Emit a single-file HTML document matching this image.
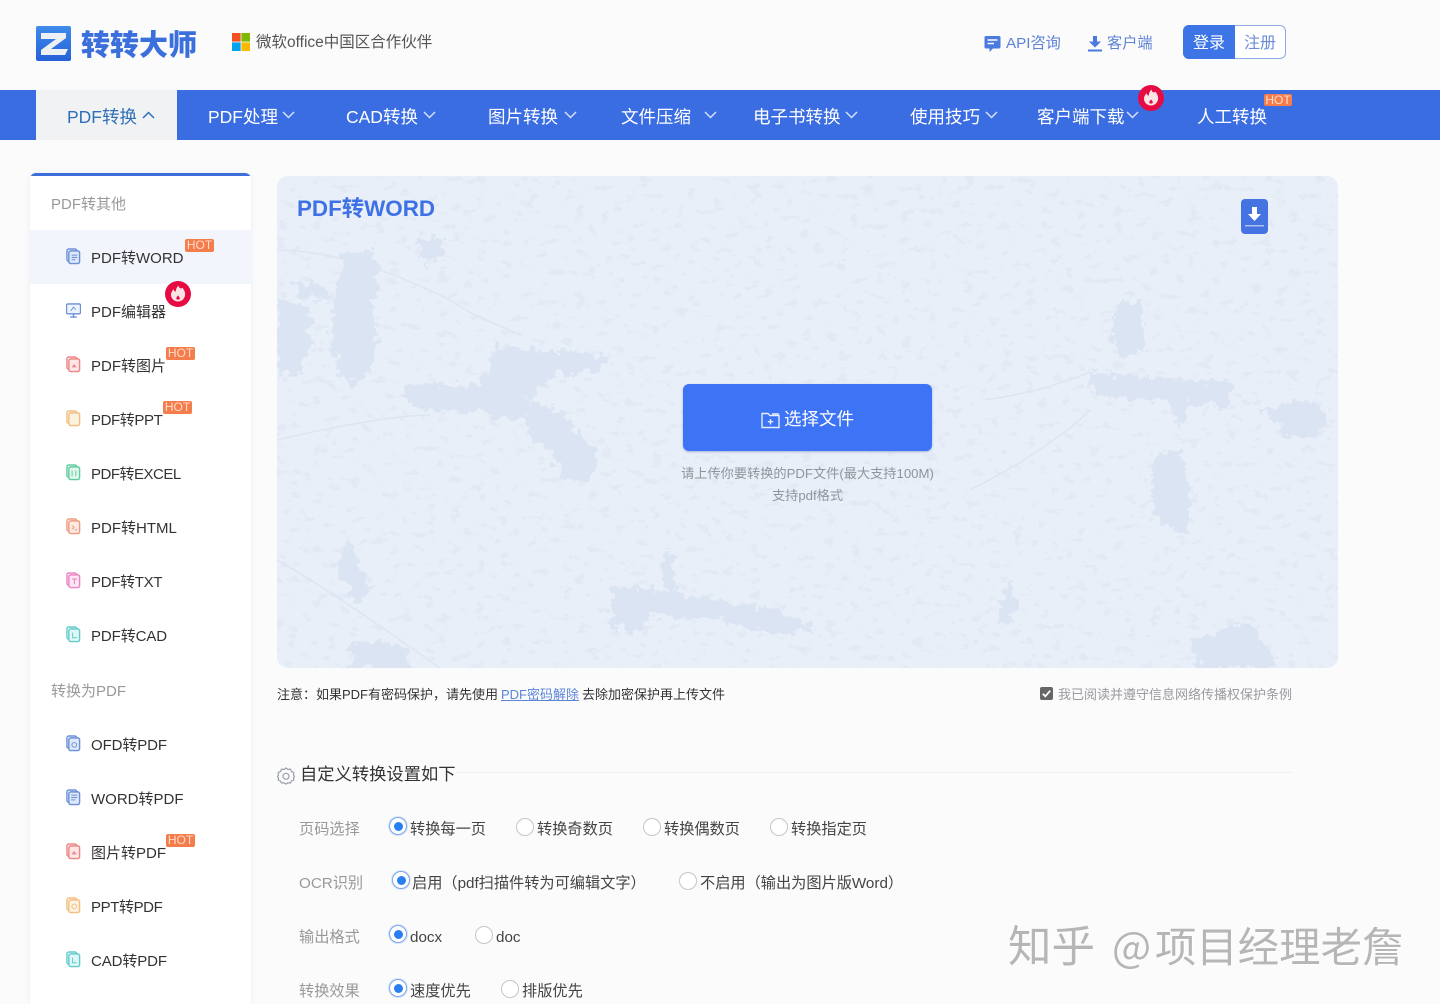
<!DOCTYPE html>
<html lang="zh">
<head>
<meta charset="utf-8">
<title>PDF转WORD</title>
<style>
html,body{margin:0;padding:0;background:#fbfbfc;width:1440px;height:1004px;overflow:hidden;}
body{position:relative;font-family:"Liberation Sans","Noto Sans CJK SC",sans-serif;color:#333;}
#w{position:absolute;left:0;top:0;width:1440px;height:1004px;overflow:hidden;}
.t{position:absolute;white-space:nowrap;line-height:24px;height:24px;}
.a{position:absolute;}
.nav{font-size:17.500px;color:#fff;top:105px;}
.chev{position:absolute;top:111px;width:13px;height:8px;}
.side{font-size:15px;color:#333;left:91px;}
.ghead{font-size:15px;color:#999;left:51px;}
.hot{position:absolute;width:29px;height:13px;background:#f57c4b;border-radius:2px;color:#ffdccd;font:12px/13px "Liberation Sans",sans-serif;text-align:center;}
.flame{position:absolute;width:26px;height:26px;}
.ic{position:absolute;left:66px;width:15px;height:17px;}
.lab{font-size:15.200px;color:#999;left:299px;}
.opt{font-size:15.200px;color:#444;}
.r{position:absolute;width:16px;height:16px;border:1px solid #c6c6c6;border-radius:50%;background:#fff;}
.r.on{border:1px solid #7fa8ea;box-shadow:0 0 0 1px #d6e4f8;}
.r.on:after{content:"";position:absolute;left:3.500px;top:3.500px;width:9px;height:9px;border-radius:50%;background:#2a7ff0;}
</style>
</head>
<body>
<div id="w">

<!-- header -->
<svg class="a" style="left:36px;top:26px" width="35" height="35" viewBox="0 0 35 35">
<defs><linearGradient id="lg" x1="0" y1="0" x2="0" y2="1"><stop offset="0" stop-color="#3f8bea"/><stop offset="1" stop-color="#2561d8"/></linearGradient></defs>
<rect width="35" height="35" rx="2" fill="url(#lg)"/>
<path d="M5 7H30V12L15 23H32L29 29H5V24L20 13H5Z" fill="#eef1f4"/>
</svg>
<div class="t" style="left:81px;top:28px;height:30px;line-height:30px;font-size:29px;font-weight:900;color:#3b70dc;font-family:'Noto Sans CJK SC',sans-serif;">转转大师</div>
<svg class="a" style="left:232px;top:33px" width="18" height="18" viewBox="0 0 18 18">
<rect width="8.600" height="8.600" fill="#f25022"/><rect x="9.400" width="8.600" height="8.600" fill="#7fba00"/><rect y="9.400" width="8.600" height="8.600" fill="#00a4ef"/><rect x="9.400" y="9.400" width="8.600" height="8.600" fill="#ffb900"/>
</svg>
<div class="t" style="left:256px;top:31px;font-size:15.500px;color:#555;">微软office中国区合作伙伴</div>

<svg class="a" style="left:984px;top:35px" width="17" height="18" viewBox="0 0 17 18">
<path d="M2 1H15A1.500 1.500 0 0 1 16.500 2.500V12A1.500 1.500 0 0 1 15 13.500H9L5.500 17V13.500H2A1.500 1.500 0 0 1 .5 12V2.500A1.500 1.500 0 0 1 2 1Z" fill="#4a7ae0"/>
<path d="M3.500 5H13.500M3.500 8.500H10" stroke="#fff" stroke-width="1.400"/>
</svg>
<div class="t" style="left:1006px;top:32px;font-size:15.200px;color:#5f83d4;">API咨询</div>
<svg class="a" style="left:1087px;top:35px" width="16" height="17" viewBox="0 0 16 17">
<path d="M6 1H10V6.500H14L8 12.500L2 6.500H6Z" fill="#4a7ae0"/><rect x="1" y="14.500" width="14" height="2" fill="#4a7ae0"/>
</svg>
<div class="t" style="left:1107px;top:32px;font-size:15.200px;color:#5f83d4;">客户端</div>
<div class="a" style="left:1183px;top:25px;width:101px;height:32px;border:1px solid #8fa9e3;border-radius:6px;background:#fff;"></div>
<div class="a" style="left:1183px;top:25px;width:52px;height:34px;background:#3d74e6;border-radius:6px 0 0 6px;"></div>
<div class="t" style="left:1193px;top:32px;font-size:16px;color:#fff;">登录</div>
<div class="t" style="left:1244px;top:32px;font-size:16px;color:#6d8cd6;">注册</div>

<!-- nav -->
<div class="a" style="left:0;top:90px;width:1440px;height:50px;background:#3a6ce2;"></div>
<div class="a" style="left:36px;top:90px;width:141px;height:50px;background:#f1f2f4;"></div>
<div class="t nav" style="left:67px;color:#2e6fb8;">PDF转换</div>
<svg class="chev" style="left:142px" viewBox="0 0 13 8"><path d="M1 7L6.500 1.500L12 7" fill="none" stroke="#2e6fb8" stroke-width="1.500"/></svg>
<div class="t nav" style="left:208px;">PDF处理</div>
<svg class="chev" style="left:282px" viewBox="0 0 13 8"><path d="M1 1L6.500 6.500L12 1" fill="none" stroke="#d5e1f8" stroke-width="1.500"/></svg>
<div class="t nav" style="left:346px;">CAD转换</div>
<svg class="chev" style="left:423px" viewBox="0 0 13 8"><path d="M1 1L6.500 6.500L12 1" fill="none" stroke="#d5e1f8" stroke-width="1.500"/></svg>
<div class="t nav" style="left:488px;">图片转换</div>
<svg class="chev" style="left:564px" viewBox="0 0 13 8"><path d="M1 1L6.500 6.500L12 1" fill="none" stroke="#d5e1f8" stroke-width="1.500"/></svg>
<div class="t nav" style="left:621px;">文件压缩</div>
<svg class="chev" style="left:704px" viewBox="0 0 13 8"><path d="M1 1L6.500 6.500L12 1" fill="none" stroke="#d5e1f8" stroke-width="1.500"/></svg>
<div class="t nav" style="left:753px;">电子书转换</div>
<svg class="chev" style="left:845px" viewBox="0 0 13 8"><path d="M1 1L6.500 6.500L12 1" fill="none" stroke="#d5e1f8" stroke-width="1.500"/></svg>
<div class="t nav" style="left:910px;">使用技巧</div>
<svg class="chev" style="left:985px" viewBox="0 0 13 8"><path d="M1 1L6.500 6.500L12 1" fill="none" stroke="#d5e1f8" stroke-width="1.500"/></svg>
<div class="t nav" style="left:1037px;">客户端下载</div>
<svg class="chev" style="left:1126px" viewBox="0 0 13 8"><path d="M1 1L6.500 6.500L12 1" fill="none" stroke="#d5e1f8" stroke-width="1.500"/></svg>
<div class="t nav" style="left:1197px;">人工转换</div>
<svg class="flame" style="left:1138px;top:85px" viewBox="0 0 26 26"><circle cx="13" cy="13" r="13" fill="#e60b42"/><path d="M13.500 4.500C14 7.500 16 8 17.500 6.800C19.800 10 20.500 12 20 14.500C19.500 18 16.500 20.500 13 20.500C9.500 20.500 6.500 18 6 14.500C5.700 12 7 10 8.500 8.200C9 10 10 10.500 10.800 10.500C10.800 8 12 6 13.500 4.500Z" fill="#fbe3e6"/><path d="M13 14.500C14.300 15.800 15 16.800 14.700 18C14.200 18.800 11.800 18.800 11.300 18C11 16.800 12 15.800 13 14.500Z" fill="#e60b42"/></svg>
<div class="hot" style="left:1264px;top:94px;width:28px;height:12px;line-height:12px;">HOT</div>

<!-- sidebar -->
<div class="a" style="left:30px;top:173px;width:221px;height:831px;background:#fff;border-radius:6px 6px 0 0;box-shadow:0 0 5px rgba(120,130,150,.13);overflow:hidden;">
  <div style="height:3px;background:#3d6fdc;"></div>
  <div class="a" style="left:0;top:57px;width:221px;height:54px;background:#f2f5fb;"></div>
</div>

<div class="t ghead" style="top:193px;">PDF转其他</div>
<div class="t side" style="top:247px;">PDF转WORD</div>
<div class="t side" style="top:301px;">PDF编辑器</div>
<div class="t side" style="top:355px;">PDF转图片</div>
<div class="t side" style="top:409px;letter-spacing:-.4px;">PDF转PPT</div>
<div class="t side" style="top:463px;letter-spacing:-.5px;">PDF转EXCEL</div>
<div class="t side" style="top:517px;">PDF转HTML</div>
<div class="t side" style="top:571px;letter-spacing:-.3px;">PDF转TXT</div>
<div class="t side" style="top:625px;letter-spacing:-.1px;">PDF转CAD</div>
<div class="t ghead" style="top:680px;">转换为PDF</div>
<div class="t side" style="top:734px;letter-spacing:-.1px;">OFD转PDF</div>
<div class="t side" style="top:788px;">WORD转PDF</div>
<div class="t side" style="top:842px;">图片转PDF</div>
<div class="t side" style="top:896px;letter-spacing:-.4px;">PPT转PDF</div>
<div class="t side" style="top:950px;letter-spacing:-.1px;">CAD转PDF</div>

<div class="hot" style="left:185px;top:239px;">HOT</div>
<div class="hot" style="left:166px;top:347px;">HOT</div>
<div class="hot" style="left:163px;top:401px;">HOT</div>
<div class="hot" style="left:166px;top:834px;">HOT</div>
<svg class="flame" style="left:165px;top:281px" viewBox="0 0 26 26"><circle cx="13" cy="13" r="13" fill="#e60b42"/><path d="M13.500 4.500C14 7.500 16 8 17.500 6.800C19.800 10 20.500 12 20 14.500C19.500 18 16.500 20.500 13 20.500C9.500 20.500 6.500 18 6 14.500C5.700 12 7 10 8.500 8.200C9 10 10 10.500 10.800 10.500C10.800 8 12 6 13.500 4.500Z" fill="#fbe3e6"/><path d="M13 14.500C14.300 15.800 15 16.800 14.700 18C14.200 18.800 11.800 18.800 11.300 18C11 16.800 12 15.800 13 14.500Z" fill="#e60b42"/></svg>

<svg class="ic" style="top:248px" viewBox="0 0 16 18"><rect x="1" y="1" width="10.500" height="13" rx="2" fill="#fff" stroke="#6a90d8" stroke-width="1.500"/><rect x="3" y="3" width="11.500" height="13.500" rx="2" fill="#dfe8f9" stroke="#6a90d8" stroke-width="1.500"/><path d="M6 7.500H12M6 10H12M6 12.500H10" stroke="#6a90d8" stroke-width="1.100"/></svg>
<svg class="ic" style="top:302px" viewBox="0 0 16 18"><rect x="0.500" y="2" width="15" height="10.500" rx="1.500" fill="#eef3fc" stroke="#6a90d8" stroke-width="1.500"/><path d="M8 12.500V15.500M4.500 16H11.500" stroke="#6a90d8" stroke-width="1.500"/><path d="M5 9.500L8 5.500L10.500 8" fill="none" stroke="#6a90d8" stroke-width="1"/></svg>
<svg class="ic" style="top:356px" viewBox="0 0 16 18"><rect x="1" y="1" width="10.500" height="13" rx="2" fill="#fff" stroke="#ee8585" stroke-width="1.500"/><rect x="3" y="3" width="11.500" height="13.500" rx="2" fill="#fce6e6" stroke="#ee8585" stroke-width="1.500"/><path d="M6 12L8.500 8.500L11.500 12Z" fill="#ee8585"/></svg>
<svg class="ic" style="top:410px" viewBox="0 0 16 18"><rect x="1" y="1" width="10.500" height="13" rx="2" fill="#fff" stroke="#f3be7f" stroke-width="1.500"/><rect x="3" y="3" width="11.500" height="13.500" rx="2" fill="#fdf1e0" stroke="#f3be7f" stroke-width="1.500"/></svg>
<svg class="ic" style="top:464px" viewBox="0 0 16 18"><rect x="1" y="1" width="10.500" height="13" rx="2" fill="#fff" stroke="#62cb9e" stroke-width="1.500"/><rect x="3" y="3" width="11.500" height="13.500" rx="2" fill="#e2f8ee" stroke="#62cb9e" stroke-width="1.500"/><path d="M6.500 7V13M10.500 7V13" stroke="#62cb9e" stroke-width="1.100"/></svg>
<svg class="ic" style="top:518px" viewBox="0 0 16 18"><rect x="1" y="1" width="10.500" height="13" rx="2" fill="#fff" stroke="#ef9b7e" stroke-width="1.500"/><rect x="3" y="3" width="11.500" height="13.500" rx="2" fill="#fdeae3" stroke="#ef9b7e" stroke-width="1.500"/><path d="M6.500 8L8.500 10L6.500 12M9 12.500H12" fill="none" stroke="#ef9b7e" stroke-width="1.100"/></svg>
<svg class="ic" style="top:572px" viewBox="0 0 16 18"><rect x="1" y="1" width="10.500" height="13" rx="2" fill="#fff" stroke="#e985c2" stroke-width="1.500"/><rect x="3" y="3" width="11.500" height="13.500" rx="2" fill="#fce6f3" stroke="#e985c2" stroke-width="1.500"/><path d="M6.500 7.500H11.500M9 7.500V13" stroke="#e985c2" stroke-width="1.200"/></svg>
<svg class="ic" style="top:626px" viewBox="0 0 16 18"><rect x="1" y="1" width="10.500" height="13" rx="2" fill="#fff" stroke="#62cccc" stroke-width="1.500"/><rect x="3" y="3" width="11.500" height="13.500" rx="2" fill="#e1f7f7" stroke="#62cccc" stroke-width="1.500"/><path d="M7 7V12.500H11.500" fill="none" stroke="#62cccc" stroke-width="1.100"/></svg>
<svg class="ic" style="top:735px" viewBox="0 0 16 18"><rect x="1" y="1" width="10.500" height="13" rx="2" fill="#fff" stroke="#6a90d8" stroke-width="1.500"/><rect x="3" y="3" width="11.500" height="13.500" rx="2" fill="#dfe8f9" stroke="#6a90d8" stroke-width="1.500"/><circle cx="8.800" cy="10.500" r="2.500" fill="none" stroke="#6a90d8"/></svg>
<svg class="ic" style="top:789px" viewBox="0 0 16 18"><rect x="1" y="1" width="10.500" height="13" rx="2" fill="#fff" stroke="#6a90d8" stroke-width="1.500"/><rect x="3" y="3" width="11.500" height="13.500" rx="2" fill="#dfe8f9" stroke="#6a90d8" stroke-width="1.500"/><path d="M5.500 6.500H12M5.500 9H12M5.500 11.500H10" stroke="#6a90d8" stroke-width="1.100"/></svg>
<svg class="ic" style="top:843px" viewBox="0 0 16 18"><rect x="1" y="1" width="10.500" height="13" rx="2" fill="#fff" stroke="#ee8585" stroke-width="1.500"/><rect x="3" y="3" width="11.500" height="13.500" rx="2" fill="#fce6e6" stroke="#ee8585" stroke-width="1.500"/><path d="M6 12L8.500 8.500L11.500 12Z" fill="#ee8585"/></svg>
<svg class="ic" style="top:897px" viewBox="0 0 16 18"><rect x="1" y="1" width="10.500" height="13" rx="2" fill="#fff" stroke="#f3be7f" stroke-width="1.500"/><rect x="3" y="3" width="11.500" height="13.500" rx="2" fill="#fdf1e0" stroke="#f3be7f" stroke-width="1.500"/><circle cx="8.800" cy="10" r="2.500" fill="none" stroke="#f3be7f"/></svg>
<svg class="ic" style="top:951px" viewBox="0 0 16 18"><rect x="1" y="1" width="10.500" height="13" rx="2" fill="#fff" stroke="#62cccc" stroke-width="1.500"/><rect x="3" y="3" width="11.500" height="13.500" rx="2" fill="#e1f7f7" stroke="#62cccc" stroke-width="1.500"/><path d="M7 7V12.500H11.500" fill="none" stroke="#62cccc" stroke-width="1.100"/></svg>

<!-- panel -->
<svg class="a" style="left:277px;top:176px" width="1061" height="492" viewBox="277 176 1061 492">
<defs>
<clipPath id="pc"><rect x="277" y="176" width="1061" height="492" rx="11"/></clipPath>
<filter id="rough" x="-5%" y="-5%" width="110%" height="110%" color-interpolation-filters="sRGB">
<feTurbulence type="fractalNoise" baseFrequency="0.11" numOctaves="3" seed="7"/>
<feDisplacementMap in="SourceGraphic" scale="20" xChannelSelector="R" yChannelSelector="G"/>
</filter>
<filter id="speck" x="0" y="0" width="100%" height="100%" color-interpolation-filters="sRGB">
<feTurbulence type="fractalNoise" baseFrequency="0.08 0.13" numOctaves="3" seed="11"/>
<feColorMatrix values="0 0 0 0 .855  0 0 0 0 .89  0 0 0 0 .945  0 0 0 10 -6.100"/>
</filter>
</defs>
<g clip-path="url(#pc)">
<rect x="277" y="176" width="1061" height="492" fill="#e9eff8"/>
<rect x="277" y="176" width="1061" height="492" filter="url(#speck)" opacity=".45"/>
<g fill="#dbe4f2" filter="url(#rough)">
<path d="M345 250L375 252L380 285L372 300L378 330L372 372L352 385L338 372L330 330L337 285Z"/>
<path d="M277 300L310 305L312 345L300 372L277 376Z"/>
<path d="M290 280L325 285L330 300L300 298Z"/>
<path d="M495 345L540 350L612 355L600 372L560 372L545 382L525 400L530 420L500 420L480 410L430 412L402 400L410 385L470 385L490 370Z"/>
<path d="M525 400L560 410L578 430L595 455L590 480L562 478L550 450L530 440Z"/>
<path d="M1090 372L1170 378L1232 382L1230 410L1190 402L1180 425L1165 400L1110 398L1085 385Z"/>
<path d="M1260 410L1300 402L1325 405L1322 435L1290 440L1280 425Z"/>
<path d="M1155 455L1180 450L1190 490L1188 530L1160 525L1150 490Z"/>
<path d="M1118 305L1140 300L1146 350L1125 360L1110 340Z"/>
<path d="M610 585L660 590L720 600L780 610L815 628L770 635L720 620L650 615L640 632L610 625Z"/>
<path d="M352 640L405 645L410 668L350 668Z"/>
<path d="M335 560L350 540L372 590L355 600Z"/>
<path d="M660 555L672 552L678 590L665 592Z"/>
<path d="M1000 600L1010 580L1020 610L1000 628Z"/>
<path d="M1190 640L1250 622L1280 668L1200 668Z"/>
<path d="M420 240L440 235L445 260L425 265Z"/>
</g>
<g fill="none" stroke="#dde5f3" stroke-width="1.500">
<path d="M277 250C340 250 410 280 450 300C480 320 500 325 520 335"/>
<path d="M277 440C340 425 400 415 430 415"/>
<path d="M277 560C330 590 400 640 440 668"/>
<path d="M970 490C1010 470 1060 440 1090 410"/>
<path d="M985 400C1020 395 1060 385 1090 372"/>
</g>
</g>
</svg>

<div class="t" style="left:297px;top:194px;height:30px;line-height:30px;font-size:22.400px;font-weight:700;color:#3e70e6;">PDF转WORD</div>
<svg class="a" style="left:1241px;top:199px" width="27" height="35" viewBox="0 0 27 35">
<rect width="27" height="35" rx="4" fill="#4574e2"/>
<path d="M11 8H16V15H20L13.500 22L7 15H11Z" fill="#fff"/>
<rect x="4" y="26" width="19" height="1.500" fill="#a9c0f0"/>
</svg>

<div class="a" style="left:683px;top:384px;width:249px;height:67px;background:#3d74f6;border-radius:6px;box-shadow:0 1px 2px rgba(60,90,180,.4);"></div>
<svg class="a" style="left:761px;top:411px" width="19" height="18" viewBox="0 0 19 18">
<path d="M1 2.500H7L9 4.500H18V16.500H1Z" fill="none" stroke="#e6eefc" stroke-width="1.400"/>
<path d="M9.500 8V13.500M6.800 10.700H12.200M11 3H18" stroke="#e6eefc" stroke-width="1.400"/>
</svg>
<div class="t" style="left:784px;top:406px;font-size:17.500px;color:#fff;line-height:26px;height:26px;">选择文件</div>
<div class="t" style="left:557px;width:501px;text-align:center;top:462px;font-size:13.200px;color:#8f949c;">请上传你要转换的PDF文件(最大支持100M)</div>
<div class="t" style="left:557px;width:501px;text-align:center;top:484px;font-size:13.200px;color:#8f949c;">支持pdf格式</div>

<!-- note -->
<div class="t" style="left:277px;top:683px;font-size:13px;color:#333;">注意：如果PDF有密码保护，请先使用</div>
<div class="t" style="left:501px;top:683px;font-size:13px;color:#5b86d8;text-decoration:underline;">PDF密码解除</div>
<div class="t" style="left:582px;top:683px;font-size:13px;color:#333;">去除加密保护再上传文件</div>
<svg class="a" style="left:1040px;top:687px" width="13" height="13" viewBox="0 0 13 13"><rect width="13" height="13" rx="2" fill="#666"/><path d="M2.800 6.800L5.300 9.300L10.200 3.700" fill="none" stroke="#fff" stroke-width="1.800"/></svg>
<div class="t" style="left:1058px;top:683px;font-size:13px;color:#9a9a9f;">我已阅读并遵守信息网络传播权保护条例</div>

<!-- settings -->
<svg class="a" style="left:277px;top:767px" width="18" height="18" viewBox="0 0 18 18">
<path d="M9 1L11 2.500L13.500 2.200L14.500 4.500L16.800 5.500L16.500 8L17.500 9.500L16.500 11L16.800 13L14.500 14L13.500 16L11 15.800L9 17L7 15.800L4.500 16L3.500 14L1.200 13L1.500 11L.5 9.500L1.500 8L1.200 5.500L3.500 4.500L4.500 2.200L7 2.500Z" fill="none" stroke="#9aa0a8" stroke-width="1.200"/>
<circle cx="9" cy="9.300" r="3" fill="none" stroke="#9aa0a8" stroke-width="1.200"/>
</svg>
<div class="t" style="left:300px;top:762px;font-size:17.300px;color:#333;">自定义转换设置如下</div>
<div class="a" style="left:456px;top:772px;width:836px;height:1px;background:#f0f0f1;"></div>

<div class="t lab" style="top:818px;">页码选择</div>
<div class="r on" style="left:389px;top:817px;"></div><div class="t opt" style="left:410px;top:818px;">转换每一页</div>
<div class="r" style="left:516px;top:818px;"></div><div class="t opt" style="left:537px;top:818px;">转换奇数页</div>
<div class="r" style="left:643px;top:818px;"></div><div class="t opt" style="left:664px;top:818px;">转换偶数页</div>
<div class="r" style="left:770px;top:818px;"></div><div class="t opt" style="left:791px;top:818px;">转换指定页</div>

<div class="t lab" style="top:872px;">OCR识别</div>
<div class="r on" style="left:392px;top:871px;"></div><div class="t opt" style="left:412px;top:872px;">启用（pdf扫描件转为可编辑文字）</div>
<div class="r" style="left:679px;top:872px;"></div><div class="t opt" style="left:700px;top:872px;">不启用（输出为图片版Word）</div>

<div class="t lab" style="top:926px;">输出格式</div>
<div class="r on" style="left:389px;top:925px;"></div><div class="t opt" style="left:410px;top:926px;">docx</div>
<div class="r" style="left:475px;top:926px;"></div><div class="t opt" style="left:496px;top:926px;">doc</div>

<div class="t lab" style="top:980px;">转换效果</div>
<div class="r on" style="left:389px;top:979px;"></div><div class="t opt" style="left:410px;top:980px;">速度优先</div>
<div class="r" style="left:501px;top:980px;"></div><div class="t opt" style="left:522px;top:980px;">排版优先</div>

<!-- watermark -->
<div class="a" style="left:1008px;top:917px;white-space:nowrap;font-size:43.500px;line-height:54px;color:#b6b6b6;font-family:'Noto Sans CJK SC',sans-serif;text-shadow:1px 1px 0 #fff;">知乎</div>
<div class="a" style="left:1112px;top:917px;white-space:nowrap;font-size:41.400px;line-height:54px;color:#b6b6b6;font-family:'Noto Sans CJK SC',sans-serif;text-shadow:1px 1px 0 #fff;">@</div>
<div class="a" style="left:1155px;top:917px;white-space:nowrap;font-size:41.400px;line-height:54px;color:#b6b6b6;font-family:'Noto Sans CJK SC',sans-serif;text-shadow:1px 1px 0 #fff;">项目经理老詹</div>

</div>
</body>
</html>
